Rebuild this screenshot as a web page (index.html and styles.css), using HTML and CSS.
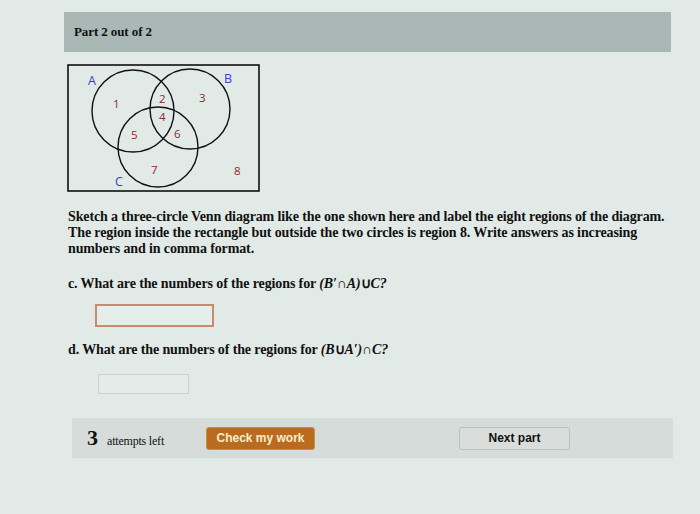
FILE: index.html
```html
<!DOCTYPE html>
<html>
<head>
<meta charset="utf-8">
<link rel="stylesheet" href="styles.css">
</head>
<body>
<div class="page">
  <div class="header">Part 2 out of 2</div>
  <div class="content">
    <svg class="venn" width="194" height="129" viewBox="0 0 194 129">
      <rect x="1" y="1" width="191" height="126" fill="none" stroke="#111" stroke-width="1.6"/>
      <circle cx="66" cy="47" r="41" fill="none" stroke="#111" stroke-width="1.4"/>
      <circle cx="123" cy="45" r="40" fill="none" stroke="#111" stroke-width="1.4"/>
      <circle cx="91" cy="83" r="40" fill="none" stroke="#111" stroke-width="1.4"/>
      <g class="setlbl">
        <text x="21" y="21">A</text>
        <text x="157" y="19">B</text>
        <text x="48" y="122">C</text>
      </g>
      <g class="num">
        <text x="46" y="44">1</text>
        <text x="92" y="39">2</text>
        <text x="132" y="38">3</text>
        <text x="92" y="57">4</text>
        <text x="64" y="75">5</text>
        <text x="107" y="74">6</text>
        <text x="84" y="110">7</text>
        <text x="167" y="111">8</text>
      </g>
    </svg>
    <p class="intro">Sketch a three-circle Venn diagram like the one shown here and label the eight regions of the diagram. The region inside the rectangle but outside the two circles is region 8. Write answers as increasing numbers and in comma format.</p>
    <p class="q">c. What are the numbers of the regions for <i>(B′</i>∩<i>A)</i>∪<i>C?</i></p>
    <div class="input active"></div>
    <p class="q q2">d. What are the numbers of the regions for <i>(B</i>∪<i>A′)</i>∩<i>C?</i></p>
    <div class="input plain"></div>
  </div>
  <div class="bar">
    <div class="attempts"><span class="count">3</span> <span class="small">attempts left</span></div>
    <button class="check">Check my work</button>
    <button class="next">Next part</button>
  </div>
</div>
</body>
</html>
```
FILE: styles.css
```css
html, body {
  margin: 0;
  padding: 0;
  background: #e2eae7;
  width: 700px;
  height: 514px;
  overflow: hidden;
}
.page {
  padding: 12px 29px 0 64px;
  font-family: "Liberation Serif", "Times New Roman", serif;
  color: #111;
}
.header {
  background: #a9b8b4;
  height: 40px;
  display: flex;
  align-items: center;
  padding-left: 10px;
  font-weight: bold;
  font-size: 13px;
  letter-spacing: -0.1px;
}
.content {
  padding: 12px 0 0 3px;
}
.venn {
  display: block;
}
.setlbl text {
  font-family: "Open Sans", "DejaVu Sans", sans-serif;
  font-size: 12.5px;
  fill: #3b3fbf;
}
.num text {
  font-family: "Open Sans", "DejaVu Sans", sans-serif;
  font-size: 11.5px;
  fill: #8a2a2a;
}
.intro {
  margin: 16px 0 0 1px;
  font-weight: bold;
  font-size: 14px;
  letter-spacing: -0.12px;
  line-height: 16px;
  width: 606px;
}
.q {
  margin: 19px 0 0 1px;
  font-weight: bold;
  font-size: 14px;
  letter-spacing: -0.12px;
  line-height: 16px;
}
.q2 {
  margin-top: 15px;
}
.input {
  box-sizing: border-box;
  margin-left: 28px;
}
.active {
  margin-top: 12px;
  width: 119px;
  height: 23px;
  border: 2px solid #c98b6e;
  background: #e6eeeb;
}
.plain {
  margin-top: 16px;
  margin-left: 31px;
  width: 91px;
  height: 20px;
  border: 1px solid #c9d0ce;
  background: #e4ecea;
}
.bar {
  margin: 24px 0 0 8px;
  width: 601px;
  height: 40px;
  background: #d6dcda;
  display: flex;
  align-items: center;
  box-sizing: border-box;
  padding-left: 15px;
}
.attempts {
  width: 119px;
  display: flex;
  align-items: baseline;
}
.count {
  font-size: 22px;
  font-weight: bold;
  margin-right: 9px;
}
.small {
  font-size: 12px;
  letter-spacing: -0.2px;
}
button {
  font-family: "Liberation Sans", Arial, sans-serif;
  font-weight: bold;
  font-size: 12px;
  height: 23px;
  border-radius: 3px;
  padding: 0;
  cursor: pointer;
}
.check {
  width: 109px;
  background: #b96b20;
  color: #f5efcc;
  border: 1px solid #c9913e;
}
.next {
  margin-left: 144px;
  width: 111px;
  background: #d9dedc;
  color: #111;
  border: 1px solid #b9c0be;
}
```
